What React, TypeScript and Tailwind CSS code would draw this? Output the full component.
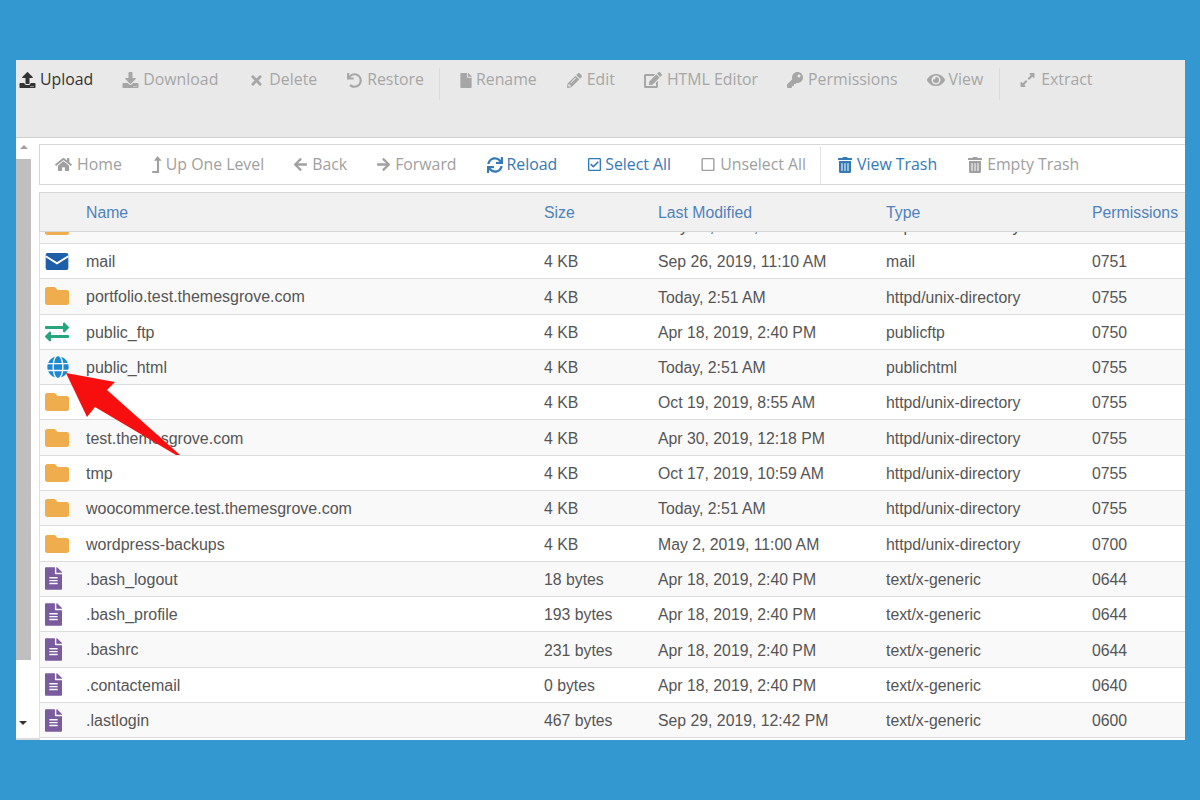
import type { ComponentType, ReactNode } from "react";
import {
  FaRegCheckSquare,
  FaDownload,
  FaEdit,
  FaExchangeAlt,
  FaExpandAlt,
  FaEye,
  FaFile,
  FaFileAlt,
  FaFolder,
  FaGlobe,
  FaHome,
  FaKey,
  FaArrowLeft,
  FaArrowRight,
  FaPencilAlt,
  FaRegSquare,
  FaSync,
  FaTimes,
  FaTrashAlt,
  FaUndo,
  FaUpload,
} from "react-icons/fa";

type Icon = ComponentType<{ className?: string }>;

const MailIcon = () => (
  <svg viewBox="0 0 24 18" className="h-[17px] w-[24px]">
    <rect width="24" height="18" rx="2" fill="#1f5ea8" />
    <path d="M0 3.5 12 11 24 3.5" fill="none" stroke="#fff" strokeWidth="2" />
  </svg>
);

const UpIcon = ({ className }: { className?: string }) => (
  <svg viewBox="0 0 12 18" className={className} fill="currentColor">
    <path d="M6.5 0 11 5H8.2v13H1v-2h5V5H2.8z" />
  </svg>
);

// icon sizes and margins differ per item, the toolbar is not evenly spaced
const TOOLBAR: { label: string; icon: Icon; box: string; mr: string; dark?: boolean }[] = [
  { label: "Upload", icon: FaUpload, box: "h-[16px] w-[17px]", mr: "mr-[29px]", dark: true },
  { label: "Download", icon: FaDownload, box: "h-[16px] w-[17px]", mr: "mr-[30px]" },
  { label: "Delete", icon: FaTimes, box: "h-[15px] w-[17px]", mr: "mr-[29px]" },
  { label: "Restore", icon: FaUndo, box: "h-[15px] w-[17px]", mr: "mr-[15px]" },
];

const TOOLBAR2: { label: string; icon: Icon; box: string; gap: string; mr: string }[] = [
  { label: "Rename", icon: FaFile, box: "h-[15px] w-[12px]", gap: "gap-[4px]", mr: "mr-[29px]" },
  { label: "Edit", icon: FaPencilAlt, box: "h-[15px] w-[17px]", gap: "gap-[4px]", mr: "mr-[29px]" },
  { label: "HTML Editor", icon: FaEdit, box: "h-[16px] w-[18px]", gap: "gap-[5px]", mr: "mr-[28px]" },
  { label: "Permissions", icon: FaKey, box: "h-[16px] w-[18px]", gap: "gap-[4px]", mr: "mr-[29px]" },
  { label: "View", icon: FaEye, box: "h-[16px] w-[18px]", gap: "gap-[4px]", mr: "mr-[16px]" },
];

const NAV: { label: string; icon: Icon; box: string; gap: string; mr: string; blue?: boolean }[] = [
  { label: "Home", icon: FaHome, box: "h-[15px] w-[17px]", gap: "gap-[5px]", mr: "mr-[29px]" },
  { label: "Up One Level", icon: UpIcon, box: "h-[17px] w-[12px]", gap: "gap-[3px]", mr: "mr-[29px]" },
  { label: "Back", icon: FaArrowLeft, box: "h-[15px] w-[15px]", gap: "gap-[4px]", mr: "mr-[29px]" },
  { label: "Forward", icon: FaArrowRight, box: "h-[15px] w-[15px]", gap: "gap-[4px]", mr: "mr-[30px]" },
  { label: "Reload", icon: FaSync, box: "h-[16px] w-[16px]", gap: "gap-[4px]", mr: "mr-[30px]", blue: true },
  { label: "Select All", icon: FaRegCheckSquare, box: "h-[15px] w-[15px]", gap: "gap-[3px]", mr: "mr-[30px]", blue: true },
  { label: "Unselect All", icon: FaRegSquare, box: "h-[15px] w-[14px]", gap: "gap-[5px]", mr: "mr-[14px]" },
];

const ROWS: [string, string, string, string, string, string][] = [
  ["folder", "", "", "May 13, 2019, 1:11 PM", "httpd/unix-directory", ""],
  ["mail", "mail", "4 KB", "Sep 26, 2019, 11:10 AM", "mail", "0751"],
  ["folder", "portfolio.test.themesgrove.com", "4 KB", "Today, 2:51 AM", "httpd/unix-directory", "0755"],
  ["ftp", "public_ftp", "4 KB", "Apr 18, 2019, 2:40 PM", "publicftp", "0750"],
  ["globe", "public_html", "4 KB", "Today, 2:51 AM", "publichtml", "0755"],
  ["folder", "", "4 KB", "Oct 19, 2019, 8:55 AM", "httpd/unix-directory", "0755"],
  ["folder", "test.themesgrove.com", "4 KB", "Apr 30, 2019, 12:18 PM", "httpd/unix-directory", "0755"],
  ["folder", "tmp", "4 KB", "Oct 17, 2019, 10:59 AM", "httpd/unix-directory", "0755"],
  ["folder", "woocommerce.test.themesgrove.com", "4 KB", "Today, 2:51 AM", "httpd/unix-directory", "0755"],
  ["folder", "wordpress-backups", "4 KB", "May 2, 2019, 11:00 AM", "httpd/unix-directory", "0700"],
  ["file", ".bash_logout", "18 bytes", "Apr 18, 2019, 2:40 PM", "text/x-generic", "0644"],
  ["file", ".bash_profile", "193 bytes", "Apr 18, 2019, 2:40 PM", "text/x-generic", "0644"],
  ["file", ".bashrc", "231 bytes", "Apr 18, 2019, 2:40 PM", "text/x-generic", "0644"],
  ["file", ".contactemail", "0 bytes", "Apr 18, 2019, 2:40 PM", "text/x-generic", "0640"],
  ["file", ".lastlogin", "467 bytes", "Sep 29, 2019, 12:42 PM", "text/x-generic", "0600"],
];

function fileIcon(kind: string): ReactNode {
  if (kind === "mail") return <MailIcon />;
  if (kind === "folder") return <FaFolder className="h-[24px] w-[24px] text-[#f0ad4e]" />;
  if (kind === "ftp") return <FaExchangeAlt className="h-[24px] w-[24px] text-[#26a67a]" />;
  if (kind === "globe") return <FaGlobe className="ml-[2px] h-[22px] w-[22px] text-[#1c88d4]" />;
  return <FaFileAlt className="h-[23px] w-[17px] text-[#7a5c9e]" />;
}

const GRID = "grid grid-cols-[46px_458px_114px_228px_206px_1fr] items-center";

export default function App() {
  return (
    <div className="h-[800px] w-[1200px] overflow-hidden bg-[#3498d0] pl-[16px] pt-[60px]">
      <div className="relative flex h-[680px] w-[1169px] flex-col bg-white font-['Open_Sans',sans-serif]">
        <div className="flex h-[78px] shrink-0 items-start border-b border-[#d0d0d0] bg-[#e9e9e9] pl-[3px] pt-[8px] text-[15.85px] text-[#a6a6a6]">
          {TOOLBAR.map((t) => (
            <div key={t.label} className={`flex h-[24px] items-center gap-[4px] ${t.mr} ${t.dark ? "text-[#333]" : ""}`}>
              <t.icon className={t.box} />
              <span>{t.label}</span>
            </div>
          ))}
          <div className="mr-[20px] h-[32px] w-px bg-[#dcdcdc]" />
          {TOOLBAR2.map((t) => (
            <div key={t.label} className={`flex h-[24px] items-center ${t.gap} ${t.mr}`}>
              <t.icon className={t.box} />
              <span>{t.label}</span>
            </div>
          ))}
          <div className="mr-[19px] h-[32px] w-px bg-[#dcdcdc]" />
          <div className="flex h-[24px] items-center gap-[5px]">
            <FaExpandAlt className="h-[16px] w-[17px]" />
            <span>Extract</span>
          </div>
        </div>

        <div className="flex min-h-0 flex-1">
          <div className="flex w-[23px] shrink-0 flex-col">
            <div className="relative h-[21px] w-[15px]">
              <div className="absolute left-[4px] top-[7px] h-0 w-0 border-x-[4px] border-b-[4px] border-x-transparent border-b-[#a0a0a0]" />
            </div>
            <div className="h-[501px] w-[15px] bg-[#bfbfbf]" />
            <div className="relative flex-1">
              <div className="absolute left-[3px] top-[61px] h-0 w-0 border-x-[4px] border-t-[4px] border-x-transparent border-t-[#333]" />
            </div>
            <div className="h-[2px] bg-[#dcdcdc]" />
          </div>

          <div className="flex min-w-0 flex-1 flex-col pt-[6px]">
            <div className="flex h-[41px] shrink-0 items-center border-y border-l border-[#d6d6d6] pl-[15px] pt-[1px] text-[15.85px] text-[#a0a0a0]">
              {NAV.map((n) => (
                <div key={n.label} className={`flex items-center ${n.gap} ${n.mr} ${n.blue ? "text-[#337ab7]" : ""}`}>
                  <n.icon className={n.box} />
                  <span>{n.label}</span>
                </div>
              ))}
              <div className="mr-[17px] h-full w-px bg-[#e4e4e4]" />
              <div className="mr-[31px] flex items-center gap-[5px] text-[#337ab7]">
                <FaTrashAlt className="h-[16px] w-[14px]" />
                <span>View Trash</span>
              </div>
              <div className="flex items-center gap-[5px]">
                <FaTrashAlt className="h-[16px] w-[14px]" />
                <span>Empty Trash</span>
              </div>
            </div>

            <div className={`${GRID} mt-[7px] h-[40px] shrink-0 border-y border-l border-[#d6d6d6] bg-[#f1f1f1] pt-[1px] font-['Liberation_Sans',sans-serif] text-[15.8px] text-[#4f81bd]`}>
              <span />
              <span>Name</span>
              <span>Size</span>
              <span>Last Modified</span>
              <span>Type</span>
              <span>Permissions</span>
            </div>

            <div className="min-h-0 flex-1 overflow-hidden border-l border-[#e0e0e0] font-['Liberation_Sans',sans-serif] text-[15.8px] text-[#555]">
              {ROWS.map((r, i) => (
                <div
                  key={i}
                  className={`${GRID} h-[35.3px] border-b border-[#dddddd] pt-[2px] ${i === 0 ? "-mt-[23.3px]" : ""} ${i % 2 === 0 ? "bg-[#f9f9f9]" : "bg-white"}`}
                >
                  <span className="-mt-[2px] flex justify-start pl-[5px]">{fileIcon(r[0])}</span>
                  <span className="text-[16px]">{r[1]}</span>
                  <span>{r[2]}</span>
                  <span>{r[3]}</span>
                  <span>{r[4]}</span>
                  <span>{r[5]}</span>
                </div>
              ))}
            </div>
          </div>
        </div>

        <svg className="absolute left-0 top-0 h-[680px] w-[1169px]" viewBox="0 0 1169 680">
          <polygon points="50,313 99,322 91,330 164,395 160,395 79,347 71,357" fill="#f70f0f" />
        </svg>
      </div>
    </div>
  );
}
